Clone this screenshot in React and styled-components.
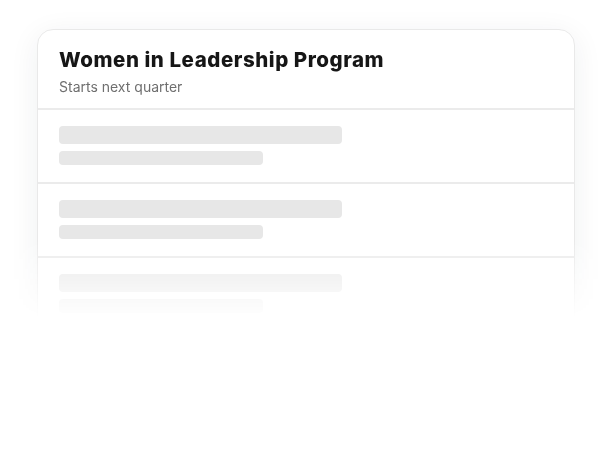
import React from "react"
import styled, { createGlobalStyle } from "styled-components"

const GlobalStyle = createGlobalStyle`
  html, body {
    margin: 0;
    padding: 0;
    background: #ffffff;
  }
  body {
    font-family: "Inter", "Noto Sans", sans-serif;
    -webkit-font-smoothing: antialiased;
  }
`

const Stage = styled.div`
  width: 612px;
  height: 450px;
  box-sizing: border-box;
  padding: 29px 37px 0;
  -webkit-mask-image: linear-gradient(to bottom, #000 0, #000 240px, transparent 318px);
  mask-image: linear-gradient(to bottom, #000 0, #000 240px, transparent 318px);
`

const Card = styled.div`
  background: #ffffff;
  border: 1px solid #e9e9e9;
  border-radius: 16px;
  box-shadow: 0 6px 30px rgba(30, 40, 60, 0.07);
  overflow: hidden;
`

const Header = styled.div`
  padding: 16px 21px 11px;
`

const Title = styled.h2`
  margin: 0;
  font-family: "Inter", sans-serif;
  font-weight: 800;
  font-size: 20.5px;
  line-height: 28px;
  letter-spacing: 0.55px;
  color: #161616;
`

const Subtitle = styled.p`
  margin: 3px 0 0;
  font-size: 14px;
  line-height: 20px;
  color: #6f6f6f;
`

const Row = styled.div`
  border-top: 2px solid #ebebeb;
  padding: 16px 21px 17px;
  display: flex;
  flex-direction: column;
  gap: 7px;
`

const Bar = styled.div`
  width: ${(p) => p.$w}px;
  height: ${(p) => p.$h}px;
  border-radius: 4px;
  background: #e7e7e7;
`

const rows = [1, 2, 3]

export default function App() {
  return (
    <>
      <GlobalStyle />
      <Stage>
        <Card>
          <Header>
            <Title>Women in Leadership Program</Title>
            <Subtitle>Starts next quarter</Subtitle>
          </Header>
          {rows.map((r) => (
            <Row key={r}>
              <Bar $w={283} $h={18} />
              <Bar $w={204} $h={14} />
            </Row>
          ))}
        </Card>
      </Stage>
    </>
  )
}
